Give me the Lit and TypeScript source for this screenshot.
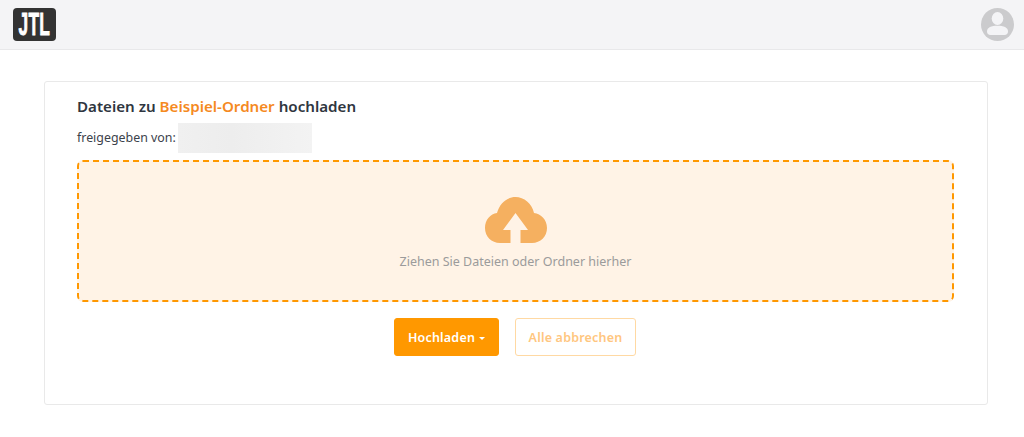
import { LitElement, html, css } from "lit";
import { customElement } from "lit/decorators.js";

@customElement("app-root")
export class AppRoot extends LitElement {
  static styles = css`
    :host {
      display: block;
      height: 437px;
      background: #fff;
      font-family: "Noto Sans", "Open Sans", sans-serif;
      color: #2f3640;
      overflow: hidden;
    }
    .topbar {
      height: 49px;
      box-sizing: content-box;
      border-bottom: 1px solid #e8e8ea;
      background: #f4f4f6;
      display: flex;
      align-items: center;
      justify-content: space-between;
      padding: 0 10px 0 13px;
    }
    .logo {
      width: 43px;
      height: 33px;
      border-radius: 4px;
      background: #333;
      color: #fff;
      display: flex;
      align-items: center;
      justify-content: center;
      overflow: hidden;
    }
    .logo span {
      flex: none;
      font-family: "Liberation Sans", sans-serif;
      font-weight: 700;
      font-size: 31px;
      line-height: 33px;
      letter-spacing: 0.5px;
      -webkit-text-stroke: 0.8px #fff;
      transform: scaleX(0.56);
    }
    .avatar {
      display: block;
    }
    .page {
      padding: 31px 36px 0 44px;
    }
    .card {
      height: 324px;
      box-sizing: border-box;
      border: 1px solid #e9e9e9;
      border-radius: 3px;
      padding: 12px 33px 0 32px;
    }
    h1 {
      margin: 0;
      font-size: 15.15px;
      line-height: 24px;
      font-weight: 600;
    }
    .accent {
      color: #f58a1f;
    }
    .shared {
      display: flex;
      align-items: center;
      height: 30px;
      margin-top: 5px;
      font-size: 12.4px;
      color: #3c424b;
    }
    .label {
      padding-bottom: 2px;
    }
    .redacted {
      width: 134px;
      height: 30px;
      margin-left: 2px;
      background: linear-gradient(90deg, #f0f0f0, #ededed 40%, #f1f1f1 80%, #f3f3f3);
    }
    .drop {
      height: 142px;
      box-sizing: border-box;
      margin-top: 7px;
      border: 2px dashed #ff9800;
      border-radius: 6px;
      background: #fff3e6;
      display: flex;
      flex-direction: column;
      align-items: center;
      padding-top: 35px;
    }
    .drop svg {
      display: block;
    }
    .drop p {
      margin: 10px 0 0;
      font-size: 12.5px;
      line-height: 18px;
      color: #9b9b9b;
    }
    .actions {
      display: flex;
      justify-content: center;
      gap: 16px;
      margin-top: 16px;
      padding-right: 1px;
    }
    .btn {
      height: 38px;
      box-sizing: border-box;
      border-radius: 3px;
      font: 600 12.5px "Noto Sans", "Open Sans", sans-serif;
      letter-spacing: 0.2px;
      padding: 0;
      display: flex;
      align-items: center;
      justify-content: center;
    }
    .primary {
      width: 105px;
      background: #ff9800;
      border: 1px solid #ff9800;
      color: #fff;
    }
    .caret {
      width: 0;
      height: 0;
      margin-left: 4px;
      margin-top: 2px;
      border-left: 3px solid transparent;
      border-right: 3px solid transparent;
      border-top: 3px solid #fff;
    }
    .ghost {
      width: 121px;
      background: #fff;
      border: 1px solid #ffd9a3;
      color: #ffc680;
    }
  `;

  render() {
    return html`
      <header class="topbar">
        <div class="logo"><span>JTL</span></div>
        <svg class="avatar" width="33" height="33" viewBox="0 0 33 33">
          <circle cx="16.5" cy="16.5" r="16.5" fill="#cbcbcd" />
          <ellipse cx="16.500" cy="10.500" rx="5.800" ry="6.500" fill="#f4f4f6" />
          <path
            d="M6 23.500c0-4 4.400-5.700 10.500-5.700s10.500 1.700 10.500 5.700c0 2-1.400 3.500-3.500 3.500h-14C7.400 27 6 25.500 6 23.500z"
            fill="#f4f4f6"
          />
        </svg>
      </header>
      <main class="page">
        <section class="card">
          <h1>Dateien zu <span class="accent">Beispiel-Ordner</span> hochladen</h1>
          <div class="shared">
            <span class="label">freigegeben von:</span><span class="redacted"></span>
          </div>
          <div class="drop">
            <svg width="62" height="46" viewBox="0 0 62 46">
              <path
                fill="#f5b060"
                d="M25 46H15C6.500 46 0 39.500 0 31 0 22.500 5.500 17 12 16 14.500 6.500 22 0 30.500 0S47 6.500 49 16c7 1 13 6.500 13 15S55.500 46 47 46H35.500V33h7.500L30.500 16 18 33h7.500V46z"
              />
            </svg>
            <p>Ziehen Sie Dateien oder Ordner hierher</p>
          </div>
          <div class="actions">
            <button class="btn primary">Hochladen<span class="caret"></span></button>
            <button class="btn ghost">Alle abbrechen</button>
          </div>
        </section>
      </main>
    `;
  }
}

declare global {
  interface HTMLElementTagNameMap {
    "app-root": AppRoot;
  }
}
